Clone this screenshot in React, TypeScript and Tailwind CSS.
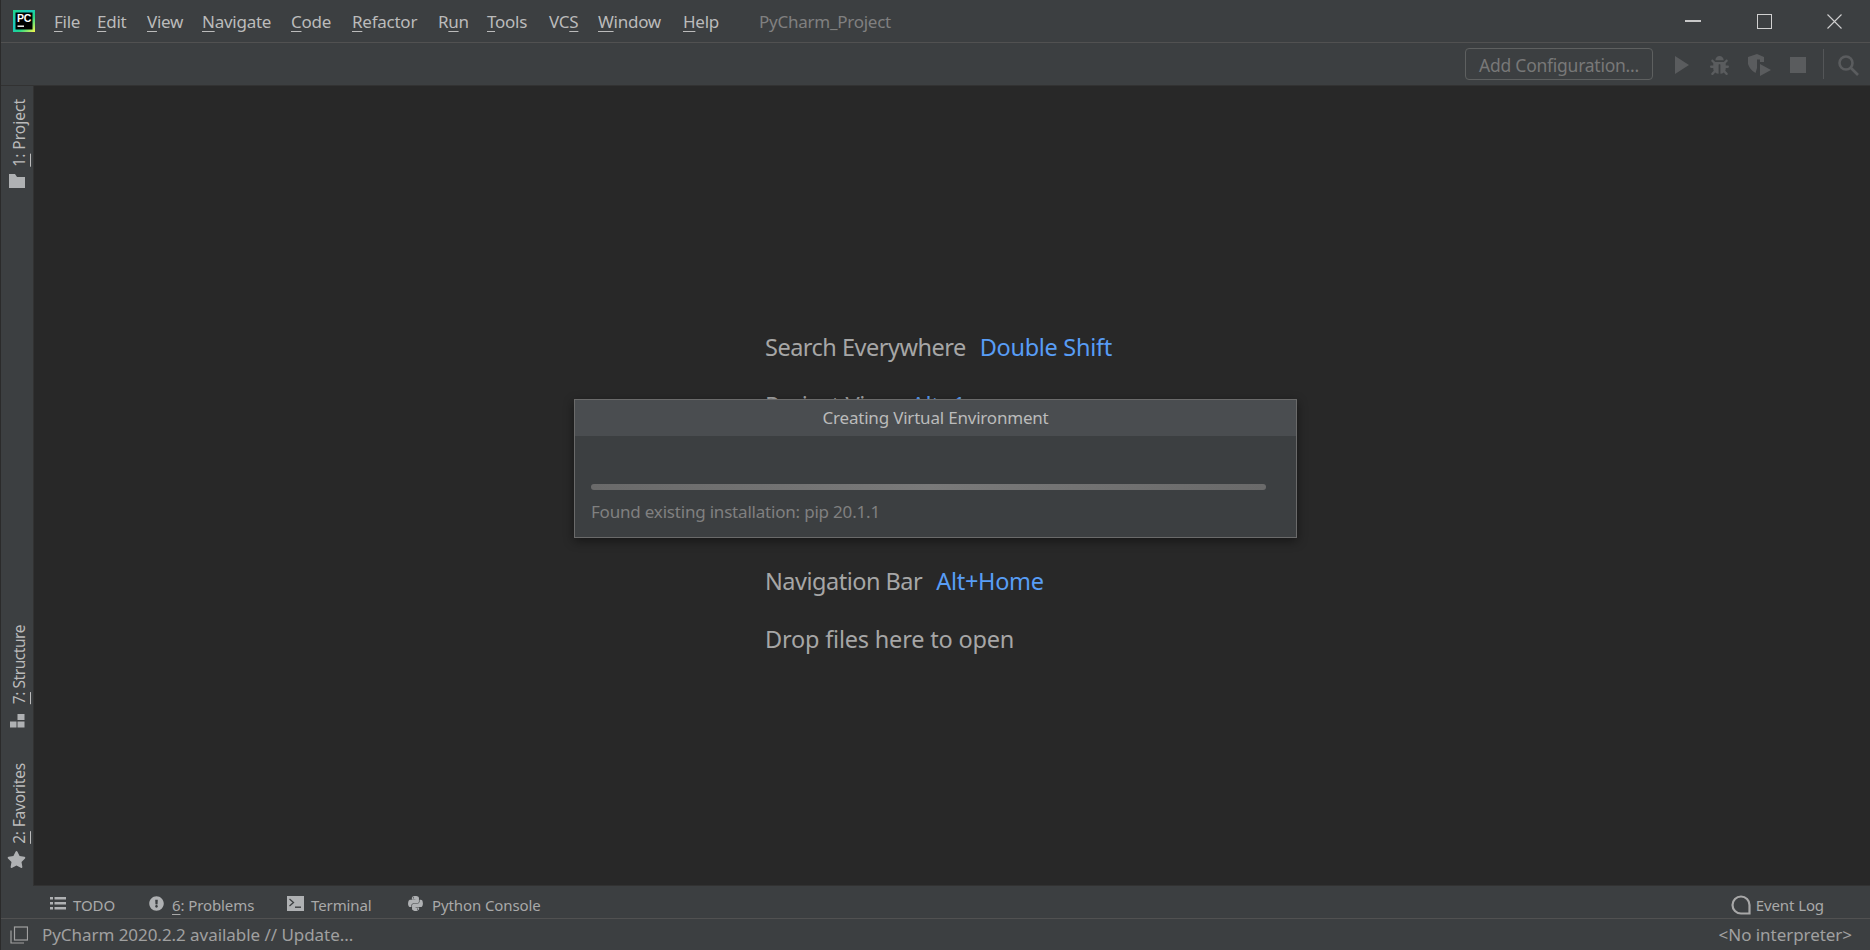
import React from "react";
import { FaBug, FaExclamationCircle, FaPython, FaStar } from "react-icons/fa";

const FONT = "font-['Noto_Sans','Open_Sans',sans-serif]";

function U({ children }: { children: React.ReactNode }) {
  return <span className="underline underline-offset-[3px] decoration-1">{children}</span>;
}

const menus: { w: string; node: React.ReactNode }[] = [
  { w: "w-[43px]", node: <><U>F</U>ile</> },
  { w: "w-[50px]", node: <><U>E</U>dit</> },
  { w: "w-[55px]", node: <><U>V</U>iew</> },
  { w: "w-[89px]", node: <><U>N</U>avigate</> },
  { w: "w-[61px]", node: <><U>C</U>ode</> },
  { w: "w-[86px]", node: <><U>R</U>efactor</> },
  { w: "w-[49px]", node: <>R<U>u</U>n</> },
  { w: "w-[62px]", node: <><U>T</U>ools</> },
  { w: "w-[49px]", node: <>VC<U>S</U></> },
  { w: "w-[85px]", node: <><U>W</U>indow</> },
  { w: "w-[77px]", node: <><U>H</U>elp</> },
];

function Logo() {
  return (
    <svg width="22" height="22" viewBox="0 0 22 22" className="shrink-0">
      <defs>
        <linearGradient id="pc" x1="0" y1="0" x2="1" y2="1">
          <stop offset="0" stopColor="#21d789" />
          <stop offset="0.4" stopColor="#19c8c0" />
          <stop offset="0.62" stopColor="#21d789" />
          <stop offset="1" stopColor="#fcf84a" />
        </linearGradient>
      </defs>
      <rect width="22" height="22" fill="url(#pc)" />
      <rect x="2.5" y="2.5" width="17" height="17" fill="#000" />
      <text x="4" y="12" fill="#fff" fontSize="10.5" fontWeight="700" fontFamily="Liberation Sans">PC</text>
      <rect x="4.5" y="15.5" width="6.5" height="1.4" fill="#fff" />
    </svg>
  );
}

function SideTab({ label, icon, track }: { label: React.ReactNode; icon: React.ReactNode; track: string }) {
  return (
    <div className="flex flex-col items-center">
      <span className={`${track} [writing-mode:vertical-rl] rotate-180 text-[15.5px] leading-[16px] text-[#bbbbbb] whitespace-nowrap ml-[3px]`}>{label}</span>
      {icon}
    </div>
  );
}

function Hint({ label, keys, gap = "ml-[15px]", track = "tracking-[-0.3px]" }: { label: string; keys?: string; gap?: string; track?: string }) {
  return (
    <div className="h-[58.5px] shrink-0 flex items-center whitespace-nowrap text-[23.5px] tracking-[-0.3px] text-[#a6a6a6]">
      <span className={track}>{label}</span>
      {keys && <span className={`${gap} text-[#589df6]`}>{keys}</span>}
    </div>
  );
}

function BottomTab({ w, icon, label }: { w: string; icon: React.ReactNode; label: React.ReactNode }) {
  return (
    <div className={`${w} flex items-center shrink-0`}>
      {icon}
      <span className="whitespace-nowrap">{label}</span>
    </div>
  );
}

export default function App() {
  return (
    <div className={`${FONT} relative w-[1870px] h-[950px] overflow-hidden bg-[#3c3f41] flex flex-col border-l border-[#2b2b2b]`}>
      {/* Title bar */}
      <div className="h-[43px] shrink-0 flex items-center border-b border-[#515151] pl-3 text-[17px] tracking-[-0.25px] text-[#bbbbbb]">
        <Logo />
        <div className="ml-[19px] flex items-center pt-[2px]">
          {menus.map((m, i) => (
            <div key={i} className={`${m.w} whitespace-nowrap`}>{m.node}</div>
          ))}
        </div>
        <span className="text-[#808080] pt-[2px] ml-[-1px]">PyCharm_Project</span>
        <div className="ml-auto flex items-center mr-[28px] gap-[55px]">
          <div className="w-[16px] h-[1.5px] bg-[#c8c8c8] mr-[1px]" />
          <div className="w-[15px] h-[15px] border border-[#d0d0d0]" />
          <svg width="15" height="15" viewBox="0 0 15 15" stroke="#d0d0d0" strokeWidth="1.1"><path d="M0.5 0.5L14.5 14.5M14.5 0.5L0.5 14.5" /></svg>
        </div>
      </div>
      {/* Toolbar */}
      <div className="h-[43px] shrink-0 flex items-center justify-end pr-[11px] border-b border-[#323232]">
        <div className="w-[188px] h-[32px] mr-[22px] border border-[#5e6060] rounded-[4px] flex items-center justify-center pt-[2px] text-[#787878] text-[17.5px] tracking-[-0.25px] whitespace-nowrap">Add Configuration...</div>
        <svg width="14" height="18" viewBox="0 0 14 18" fill="#5a5c5e" className="mr-[21px] mt-[2px]"><path d="M0 0L14 9L0 18Z" /></svg>
        <FaBug size={19} color="#5a5c5e" className="mr-[19px] mt-[2px]" />
        <svg width="23" height="22" viewBox="0 0 23 22" fill="#5a5c5e" className="mr-[19px] mt-[2px]">
          <path d="M0 3L9 0L16 3V8H12V5.5H9V14L7.5 19Q2 16 0 10Z" />
          <path d="M12 10L23 16L12 22Z" />
        </svg>
        <div className="w-[16px] h-[16px] bg-[#5a5c5e] mr-[17px] mt-[2px]" />
        <div className="w-[1px] h-[30px] bg-[#545658] mr-[14px]" />
        <svg width="21" height="21" viewBox="0 0 21 21" fill="none" stroke="#5a5c5e" strokeWidth="2.6" className="mt-[2px]">
          <circle cx="8" cy="8" r="6.5" />
          <path d="M13 13L20 20" />
        </svg>
      </div>
      {/* Middle */}
      <div className="flex-1 min-h-0 flex">
        <div className="w-[33px] shrink-0 flex flex-col pt-[13px] pb-[17px] border-r border-[#323232]">
          <SideTab
            track=""
            label={<><U>1:</U> Project</>}
            icon={
              <svg width="16" height="14" viewBox="0 0 16 14" fill="#afb1b3" className="mt-[7px]"><path d="M0 0H6L8 3H16V14H0Z" /></svg>
            }
          />
          <div className="flex-1" />
          <SideTab
            track="tracking-[-0.45px]"
            label={<><U>7:</U> Structure</>}
            icon={
              <svg width="15" height="14" viewBox="0 0 15 14" fill="#afb1b3" className="mt-[10px]">
                <rect x="7.5" y="0" width="7" height="6" />
                <rect x="0" y="7.5" width="6.5" height="6" />
                <rect x="7.5" y="7.5" width="7" height="6" />
              </svg>
            }
          />
          <div className="h-[35px] shrink-0" />
          <SideTab
            track="tracking-[-0.2px]"
            label={<><U>2:</U> Favorites</>}
            icon={<FaStar size={19} color="#afb1b3" className="mt-[6px] ml-[-1px]" />}
          />
        </div>
        <div className="flex-1 bg-[#282828] border-b border-[#323232] flex flex-col pl-[731px] pt-[232px]">
          <Hint label="Search Everywhere" keys="Double Shift" gap="ml-[14px]" track="tracking-[-0.5px]" />
          <Hint label="Project View" keys="Alt+1" />
          <div className="h-[117px] shrink-0" />
          <Hint label="Navigation Bar" keys="Alt+Home" gap="ml-[14px]" track="tracking-[-0.5px]" />
          <Hint label="Drop files here to open" track="tracking-[-0.2px]" />
        </div>
      </div>
      {/* Tool window bar */}
      <div className="h-[33px] shrink-0 flex items-center pl-[49px] pt-[6px] border-b border-[#515151] text-[#a9a9a9] text-[15px] tracking-[-0.1px]">
        <BottomTab
          w="w-[99px]"
          label="TODO"
          icon={
            <svg width="16" height="13" viewBox="0 0 16 13" fill="#afb1b3" className="mr-[7px] mb-[3px]">
              <rect x="0" y="0" width="3" height="2.5" /><rect x="4.5" y="0" width="11.5" height="2.5" />
              <rect x="0" y="5" width="3" height="2.5" /><rect x="4.5" y="5" width="11.5" height="2.5" />
              <rect x="0" y="10" width="3" height="2.5" /><rect x="4.5" y="10" width="11.5" height="2.5" />
            </svg>
          }
        />
        <BottomTab
          w="w-[138px]"
          label={<><U>6</U>: Problems</>}
          icon={<FaExclamationCircle size={15} color="#afb1b3" className="mr-[8px] mb-[3px]" />}
        />
        <BottomTab
          w="w-[120px]"
          label="Terminal"
          icon={
            <svg width="17" height="15" viewBox="0 0 17 15" className="mr-[7px] mb-[3px]">
              <rect width="17" height="15" fill="#afb1b3" />
              <path d="M2.5 3L6.5 6.5L2.5 10" fill="none" stroke="#3c3f41" strokeWidth="1.3" />
              <rect x="8" y="10.5" width="6" height="1.4" fill="#3c3f41" />
            </svg>
          }
        />
        <BottomTab
          w="w-[200px]"
          label="Python Console"
          icon={<FaPython size={17} color="#afb1b3" className="mr-[8px] mb-[3px]" />}
        />
        <div className="ml-auto flex items-center mr-[46px]">
          <svg width="20" height="20" viewBox="0 0 20 20" fill="none" stroke="#a8a8a8" strokeWidth="2.2" className="mr-[5px]">
            <path d="M18.5 18.5H10A8.5 8.5 0 1 1 18.5 10Z" />
          </svg>
          <span>Event Log</span>
        </div>
      </div>
      {/* Status bar */}
      <div className="h-[31px] shrink-0 flex items-center pl-[9px] pr-[18px] text-[17px] tracking-[-0.05px] text-[#a0a0a0]">
        <svg width="18" height="18" viewBox="0 0 18 18" fill="none" stroke="#a0a0a0" strokeWidth="1.2" className="mr-[14px]">
          <rect x="4.5" y="1" width="13" height="13" />
          <path d="M1 4.5V17H14" />
        </svg>
        <span>PyCharm 2020.2.2 available // Update...</span>
        <span className="ml-auto">&lt;No interpreter&gt;</span>
      </div>
      {/* Progress dialog */}
      <div className="absolute left-[573px] top-[399px] w-[723px] h-[139px] bg-[#3c3f41] border border-[#6a6a6a] shadow-[0_3px_10px_rgba(0,0,0,0.45)] flex flex-col">
        <div className="h-[36px] shrink-0 bg-[#4a4d50] flex items-center justify-center text-[#bbbbbb] text-[17px] tracking-[-0.2px]">Creating Virtual Environment</div>
        <div className="flex-1 px-[16px] pt-[48px]">
          <div className="w-[675px] h-[6px] rounded-[3px] bg-gradient-to-r from-[#6a6a6a] via-[#7a7a7a] to-[#6a6a6a]" />
          <div className="mt-[9px] text-[#808080] text-[17px] tracking-[-0.2px] whitespace-nowrap">Found existing installation: pip 20.1.1</div>
        </div>
      </div>
    </div>
  );
}
